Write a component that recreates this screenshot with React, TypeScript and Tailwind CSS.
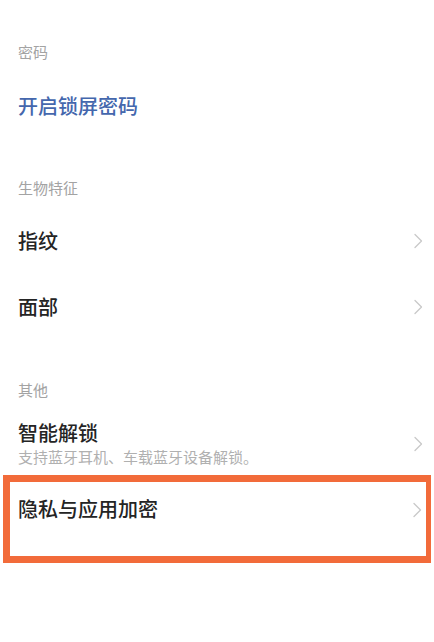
const font = { fontFamily: '"Noto Sans CJK SC", "Noto Sans", sans-serif' };

function Chevron() {
  return (
    <svg className="w-[10px] h-[16px] shrink-0" viewBox="0 0 10 16" fill="none">
      <path d="M2 1.5 L8.5 8 L2 14.5" stroke="#c9c9c9" strokeWidth="1.3" strokeLinecap="round" strokeLinejoin="round" />
    </svg>
  );
}

function SectionLabel({ text }: { text: string }) {
  return (
    <div className="h-[30px] flex items-center px-[18px] text-[15px] leading-none text-[#a3a3a3]">{text}</div>
  );
}

function Row({ title }: { title: string }) {
  return (
    <div className="h-[66px] flex items-center justify-between pl-[18px] pr-[11px]">
      <span className="text-[20px] leading-none font-medium text-[#242424]">{title}</span>
      <Chevron />
    </div>
  );
}

export default function App() {
  return (
    <div className="w-[434px] h-[642px] bg-white overflow-hidden" style={font}>
      <div className="h-[36px]" />
      <SectionLabel text="密码" />
      <div className="h-[10px]" />
      <div className="h-[60px] flex items-center px-[18px]">
        <span className="text-[20px] leading-none font-medium text-[#4467ad]">开启锁屏密码</span>
      </div>
      <div className="h-[36px]" />
      <SectionLabel text="生物特征" />
      <div className="h-[6px]" />
      <Row title="指纹" />
      <Row title="面部" />
      <div className="h-[34px]" />
      <SectionLabel text="其他" />
      <div className="h-[71px] flex items-start justify-between pl-[18px] pr-[11px] pt-[19px]">
        <div className="flex flex-col gap-[6px]">
          <span className="text-[20px] leading-none font-medium text-[#242424]">智能解锁</span>
          <span className="text-[15px] leading-none text-[#b0b0b0]">支持蓝牙耳机、车载蓝牙设备解锁。</span>
        </div>
        <span className="mt-[13px]"><Chevron /></span>
      </div>
      <div className="ml-[3px] w-[428px] h-[88px] border-[7px] border-r-[5px] border-[#f26b3a] flex items-start justify-between pl-[8px] pr-[4px] pt-[17px]">
        <span className="text-[20px] leading-none font-medium text-[#242424]">隐私与应用加密</span>
        <span className="mt-[3px]"><Chevron /></span>
      </div>
    </div>
  );
}
